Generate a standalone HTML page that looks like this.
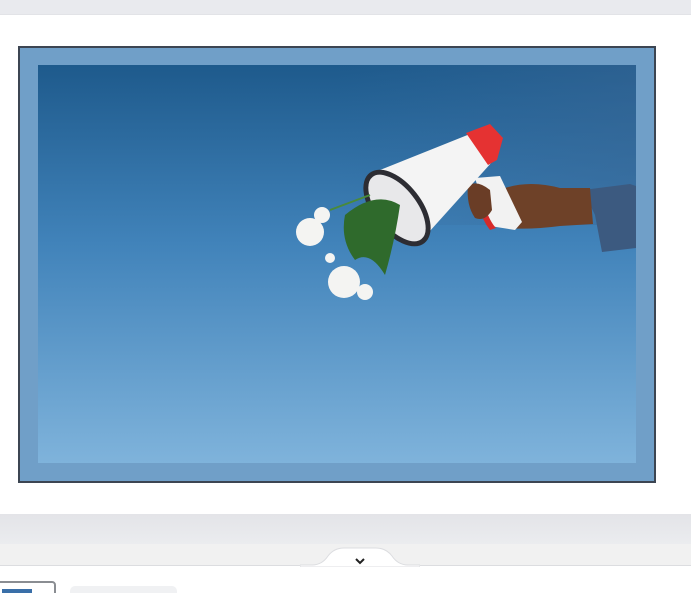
<!DOCTYPE html>
<html><head><meta charset="utf-8"><style>
html,body{margin:0;padding:0;width:691px;height:593px;overflow:hidden;background:#fff;font-family:"Liberation Sans",sans-serif;position:relative}
.top{position:absolute;left:0;top:0;width:691px;height:14px;background:#e9eaee;border-bottom:1px solid #e2e3e7}
.frame{position:absolute;left:18px;top:46px;width:634px;height:433px;background:#709fc8;border:2px solid #3c4552}
.band{position:absolute;left:0;top:514px;width:691px;height:30px;background:linear-gradient(#e3e4e8,#ebecef)}
.bar{position:absolute;left:0;top:544px;width:691px;height:21px;background:#f1f1f1;border-bottom:1px solid #dcdde0}
.b1{position:absolute;left:-4px;top:581px;width:56px;height:20px;border:2px solid #8a8d92;border-radius:4px;background:#fff}
.b1 i{position:absolute;left:4px;top:6px;width:30px;height:10px;background:#3a6fa8}
.b2{position:absolute;left:70px;top:586px;width:107px;height:20px;background:#f0f1f3;border-radius:5px}
</style></head><body>
<div class="top"></div>
<div class="frame"></div>
<svg style="position:absolute;left:0;top:0" width="691" height="593">
<defs>
<linearGradient id="sky" x1="0" y1="0" x2="0" y2="1">
<stop offset="0" stop-color="#1e5a8c"/><stop offset="0.45" stop-color="#4183ba"/><stop offset="1" stop-color="#7fb3db"/>
</linearGradient>
<linearGradient id="tr" x1="0" y1="0" x2="1" y2="0">
<stop offset="0.5" stop-color="#35699a" stop-opacity="0"/><stop offset="1" stop-color="#3a6795" stop-opacity="0.5"/>
</linearGradient>
</defs>
<rect x="38" y="65" width="598" height="398" fill="url(#sky)"/>
<rect x="38" y="65" width="598" height="160" fill="url(#tr)"/>
<!-- sleeve -->
<path d="M583 190 L630 184 L636 186 L636 248 L602 252 L595 215 Z" fill="#3c5a80"/>
<!-- arm -->
<path d="M505 188 Q530 180 560 188 L590 188 L593 224 L560 226 Q530 230 505 228 Z" fill="#6e4128"/>
<!-- handle -->
<path d="M475 178 L500 176 L522 222 L515 230 L490 226 Z" fill="#f2f2f2"/>
<path d="M484 205 Q490 222 496 228 L490 230 Q482 220 480 208Z" fill="#d62a2a"/>
<path d="M468 185 Q478 180 490 190 L492 210 Q485 222 475 218 Q466 205 468 185Z" fill="#6a3d26"/>
<!-- body (cone) -->
<path d="M380 170 L470 134 L492 162 L420 242 Z" fill="#f4f4f4"/>
<path d="M466 133 L490 124 L503 138 L497 160 L488 165 Z" fill="#e53232"/>
<ellipse cx="397" cy="208" rx="22" ry="42" transform="rotate(-38 397 208)" fill="#e8e8ea" stroke="#2d2d33" stroke-width="5"/>
<!-- leaves -->
<path d="M345 215 Q375 190 400 205 Q395 240 385 275 Q370 250 355 260 Q340 240 345 215Z" fill="#2f6a2c"/>
<path d="M330 210 L370 195" stroke="#4a8a3a" stroke-width="2"/>
<!-- flowers -->
<g fill="#f4f4f2">
<circle cx="310" cy="232" r="14"/><circle cx="322" cy="215" r="8"/>
<circle cx="344" cy="282" r="16"/><circle cx="365" cy="292" r="8"/>
<circle cx="330" cy="258" r="5"/>
</g>
</svg>
<div class="band"></div>
<div class="bar"></div>
<svg style="position:absolute;left:300px;top:544px" width="120" height="23">
<path d="M0 21 L12 21 Q22 21 28 12 Q34 4 44 4 L76 4 Q86 4 92 12 Q98 21 108 21 L120 21 L120 23 L0 23Z" fill="#fff" stroke="#dcdde0" stroke-width="1"/>
<path d="M56 15 L60 19 L64 15" fill="none" stroke="#222" stroke-width="2"/>
</svg>
<div class="b1"><i></i></div>
<div class="b2"></div>
</body></html>
